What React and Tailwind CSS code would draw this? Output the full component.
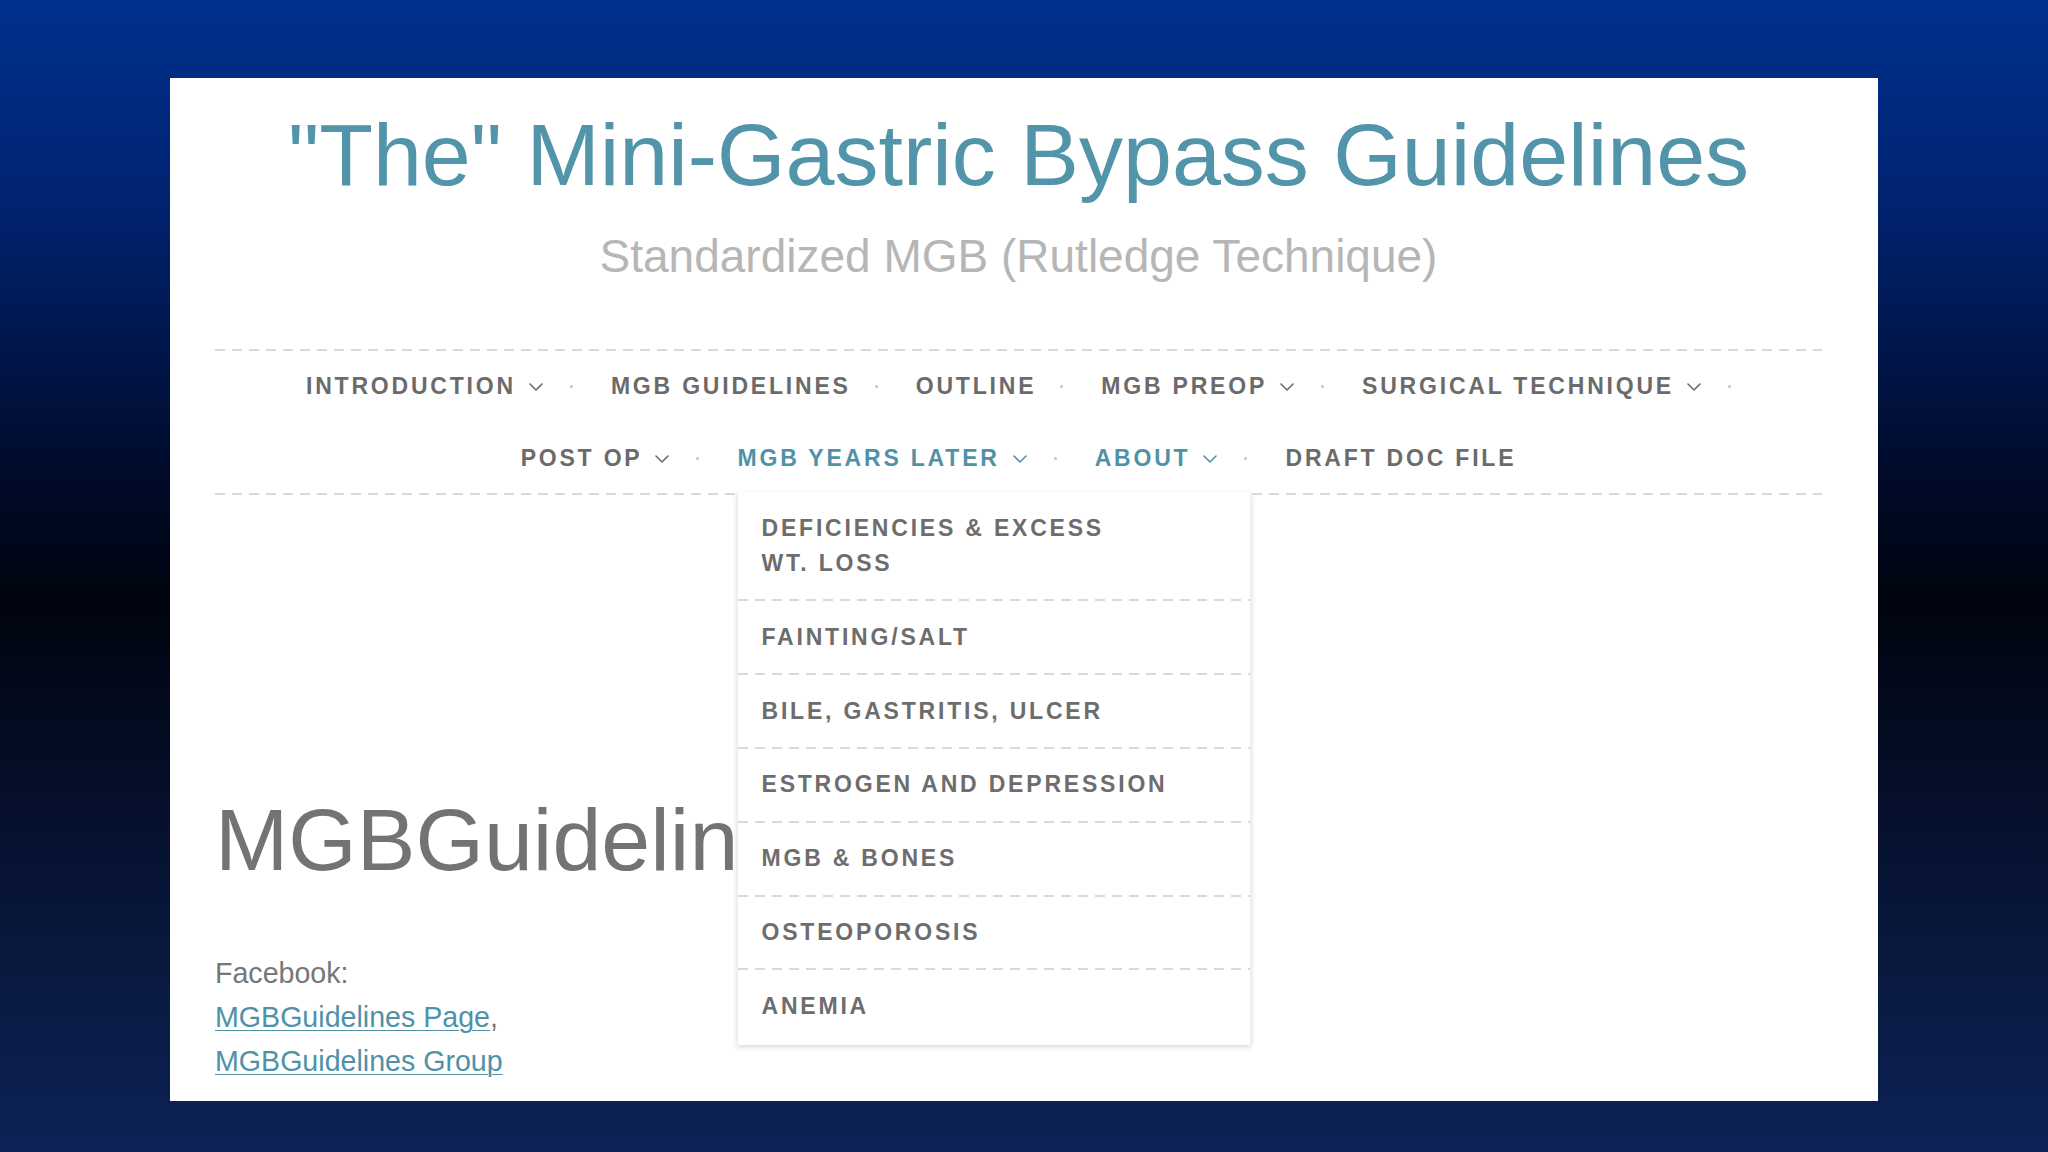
const FONT = "font-['Liberation_Sans',Arial,sans-serif]";

const ROW_ONE = [
  { label: 'Introduction', sub: true },
  { label: 'MGB Guidelines' },
  { label: 'Outline' },
  { label: 'MGB Preop', sub: true },
  { label: 'Surgical Technique', sub: true },
];

const ROW_TWO = [
  { label: 'Post Op', sub: true },
  { label: 'MGB Years Later', sub: true, active: true, open: true },
  { label: 'About', sub: true, active: true },
  { label: 'Draft Doc File', last: true },
];

const SUBMENU = [
  ['Deficiencies & Excess', 'Wt. Loss'],
  ['Fainting/Salt'],
  ['Bile, Gastritis, Ulcer'],
  ['Estrogen and Depression'],
  ['MGB & Bones'],
  ['Osteoporosis'],
  ['Anemia'],
];

/* dashed rule, drawn as a repeating gradient so the dash length is exact */
const Dashed = ({ className = '' }) => (
  <div
    className={`h-[2px] w-full bg-[linear-gradient(to_right,#d9d9d9_10px,transparent_10px)] bg-[length:17px_2px] bg-repeat-x ${className}`}
  />
);

const Chevron = () => (
  <svg className="ml-[13px] mt-[2px] w-[14px] h-[8px]" viewBox="0 0 14 8" fill="none" stroke="currentColor" strokeWidth={1.6}>
    <polyline points="1,1 7,7 13,1" strokeLinecap="round" strokeLinejoin="round" />
  </svg>
);

function NavItem({ item }) {
  const color = item.active ? 'text-[#4f92a8]' : 'text-[#6b6b6b]';

  return (
    <li className={`relative flex items-center h-[72px] ${color}`}>
      <span className="text-[23px] font-bold uppercase tracking-[2.8px] leading-[72px]">{item.label}</span>
      {item.sub && <Chevron />}
      {!item.last && (
        <span className={`${item.sub ? 'ml-[27px]' : 'ml-[24px]'} w-[3px] h-[3px] rounded-full bg-[#c4c4c4]`} />
      )}

      {item.open && (
        <div className="absolute left-0 top-[70px] z-10 w-[514px] bg-white shadow-[0_2px_5px_rgba(0,0,0,0.16)] border-x border-[#efefef]">
          {SUBMENU.map((lines, i) => {
            const isFirst = i === 0;
            const isLast = i === SUBMENU.length - 1;
            return (
              <div key={i}>
                <div
                  className={`pl-[23px] ${isFirst ? 'pt-[19px]' : 'pt-[18.4px]'} ${isLast ? 'pb-[21px]' : 'pb-[18.4px]'}`}
                >
                  {lines.map((l) => (
                    <div key={l} className="text-[23px] font-bold uppercase tracking-[2.8px] leading-[35px] text-[#6d6d6d]">
                      {l}
                    </div>
                  ))}
                </div>
                {!isLast && <Dashed />}
              </div>
            );
          })}
        </div>
      )}
    </li>
  );
}

export default function App() {
  return (
    <div
      className={`${FONT} w-full h-[1152px] pt-[78px] pl-[170px] bg-[linear-gradient(to_bottom,#00308e_0%,#00236f_18%,#000c2e_40%,#00040e_52%,#06112f_72%,#0d2356_100%)]`}
    >
      <div className="relative w-[1708px] h-[1023px] bg-white overflow-hidden pt-[27px] pl-[45px] pr-[56px]">
        {/* HEADER */}
        <h1 className="text-center text-[88px] leading-[100px] text-[#5294a9] font-normal">
          "The" Mini-Gastric Bypass Guidelines
        </h1>
        <p className="mt-[21px] text-center text-[46px] leading-[60px] text-[#b6b6b6]">
          Standardized MGB (Rutledge Technique)
        </p>

        {/* NAVIGATION */}
        <nav className="mt-[63px]">
          <Dashed />
          <ul className="-mt-[1px] flex justify-center gap-x-[38px]">
            {ROW_ONE.map((it) => (
              <NavItem key={it.label} item={it} />
            ))}
          </ul>
          <ul className="relative z-10 flex justify-center gap-x-[38px]">
            {ROW_TWO.map((it) => (
              <NavItem key={it.label} item={it} />
            ))}
          </ul>
          <Dashed className="-mt-[1px]" />
        </nav>

        {/* PAGE BODY */}
        <h2 className="mt-[295px] text-[88px] leading-[100px] text-[#737373] font-normal">MGBGuidelines</h2>

        <div className="mt-[61px] text-[28.6px] leading-[44px] text-[#777777]">
          <p>Facebook:</p>
          <p>
            <a href="#" className="text-[#4f92a8] underline underline-offset-[3px] decoration-1">
              MGBGuidelines Page
            </a>
            ,
          </p>
          <p>
            <a href="#" className="text-[#4f92a8] underline underline-offset-[3px] decoration-1">
              MGBGuidelines Group
            </a>
          </p>
        </div>
      </div>
    </div>
  );
}
